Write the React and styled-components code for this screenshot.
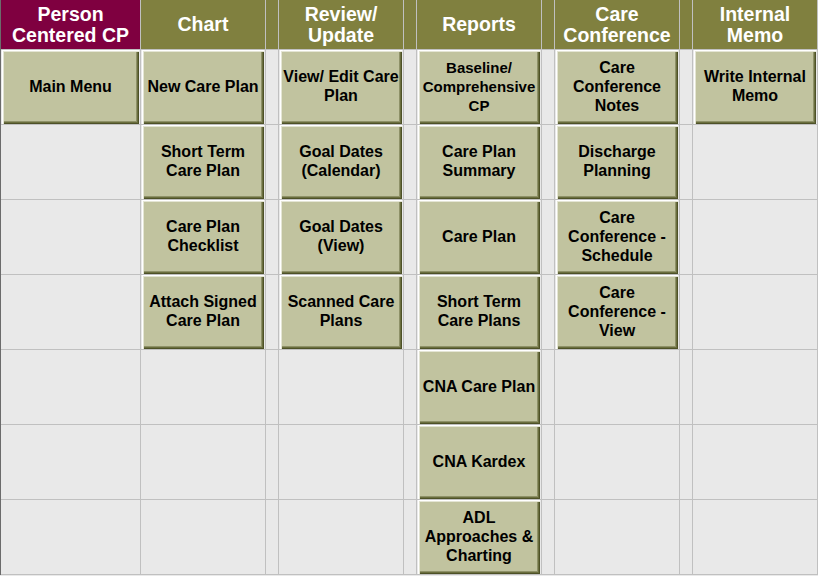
import React from "react";
import styled, { createGlobalStyle } from "styled-components";

const GlobalStyle = createGlobalStyle`
  html, body {
    margin: 0;
    padding: 0;
    background: #e9e9e9;
    font-family: "Liberation Sans", Arial, sans-serif;
  }
`;

const Sheet = styled.div`
  display: grid;
  grid-template-columns: 139px 124px 12px 124px 12px 124px 12px 124px 12px 124px;
  grid-template-rows: 49px repeat(7, 74px);
  gap: 1px;
  padding: 0 1px 1px 0;
  width: max-content;
  background: #c0c0c0;
  border-left: 1px solid #6b6b6b;
`;

const Header = styled.div`
  display: flex;
  align-items: center;
  justify-content: center;
  background: ${(p) => (p.$accent ? "#7f0040" : "#80803f")};
  color: #ffffff;
  font-weight: bold;
  font-size: 19.5px;
  line-height: 21px;
  text-align: center;
  white-space: pre;
`;

const Cell = styled.div`
  display: flex;
  background: #e9e9e9;
`;

const Button = styled.div`
  flex: 1;
  margin: 0 1px;
  padding-bottom: 2px;
  display: flex;
  align-items: center;
  justify-content: center;
  background: #c1c39f;
  color: #000000;
  font-weight: bold;
  font-size: ${(p) => p.$size}px;
  line-height: 19px;
  text-align: center;
  white-space: pre;
  box-shadow: inset 1px 1px 0 #ffffff, inset 2px 2px 0 #e4e5d4,
    inset -1px -1px 0 #4d5127, inset -2px -2px 0 #6a6e3e,
    inset -3px -3px 0 #8e9168;
`;

const columns = [
  { title: "Person\nCentered CP", accent: true, items: ["Main Menu"] },
  {
    title: "Chart",
    items: [
      "New Care Plan",
      "Short Term\nCare Plan",
      "Care Plan\nChecklist",
      "Attach Signed\nCare Plan",
    ],
  },
  null,
  {
    title: "Review/\nUpdate",
    items: [
      "View/ Edit Care\nPlan",
      "Goal Dates\n(Calendar)",
      "Goal Dates\n(View)",
      "Scanned Care\nPlans",
    ],
  },
  null,
  {
    title: "Reports",
    items: [
      { label: "Baseline/\nComprehensive\nCP", size: 15 },
      "Care Plan\nSummary",
      "Care Plan",
      "Short Term\nCare Plans",
      "CNA Care Plan",
      "CNA Kardex",
      "ADL\nApproaches &\nCharting",
    ],
  },
  null,
  {
    title: "Care\nConference",
    items: [
      "Care\nConference\nNotes",
      "Discharge\nPlanning",
      "Care\nConference -\nSchedule",
      "Care\nConference -\nView",
    ],
  },
  null,
  { title: "Internal\nMemo", items: ["Write Internal\nMemo"] },
];

const ROWS = 7;

const App = () => {
  const cells = [];
  columns.forEach((col, c) => {
    cells.push(
      <Header
        key={`h${c}`}
        $accent={col && col.accent}
        style={{ gridColumn: c + 1, gridRow: 1 }}
      >
        {col ? col.title : ""}
      </Header>
    );
  });
  for (let r = 0; r < ROWS; r++) {
    columns.forEach((col, c) => {
      const item = col && col.items[r];
      const label = item && (typeof item === "string" ? item : item.label);
      const size = item && typeof item !== "string" ? item.size : 16;
      cells.push(
        <Cell key={`c${r}-${c}`} style={{ gridColumn: c + 1, gridRow: r + 2 }}>
          {item && <Button $size={size}>{label}</Button>}
        </Cell>
      );
    });
  }

  return (
    <>
      <GlobalStyle />
      <Sheet>{cells}</Sheet>
    </>
  );
};

export default App;
